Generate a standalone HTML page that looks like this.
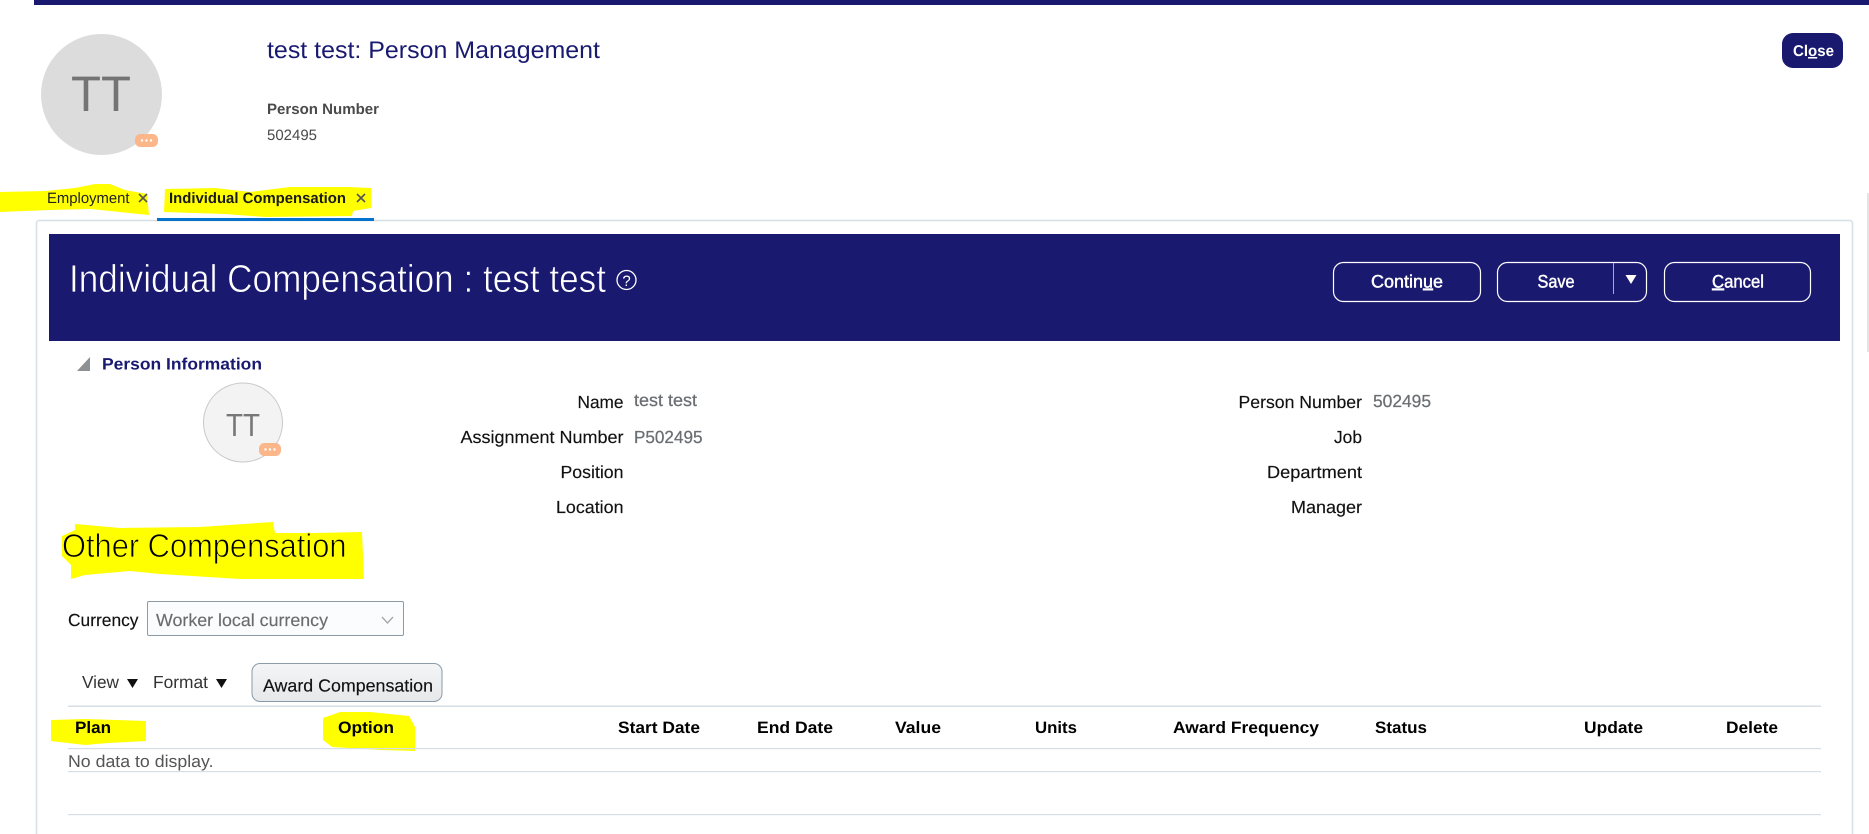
<!DOCTYPE html>
<html lang="en">
<head>
<meta charset="utf-8">
<title>Individual Compensation</title>
<style>
html,body{margin:0;padding:0;background:#fff;width:1869px;height:834px;overflow:hidden}
svg{display:block;position:absolute;left:0;top:0}
text{font-family:"Liberation Sans",sans-serif;text-rendering:geometricPrecision}
.navy{fill:#191970}
.lb{font-size:17.5px;fill:#111;stroke:#111;stroke-width:.15}
.val{font-size:17.5px;fill:#6a6e72;stroke:#6a6e72;stroke-width:.25}
.th{font-size:16.5px;font-weight:bold;fill:#000}
.btn{font-size:18px;fill:#fff;stroke:#fff;stroke-width:.45}
.ln{fill:#d6dfe6}
.y{fill:#ffff00}
</style>
</head>
<body>
<svg width="1869" height="834" viewBox="0 0 1869 834" xmlns="http://www.w3.org/2000/svg">
  <!-- top bar -->
  <rect x="34" y="0" width="1835" height="5" class="navy"/>

  <!-- large avatar -->
  <circle cx="101.5" cy="94.5" r="60.5" fill="#dcdcdc"/>
  <text x="71" y="111" font-size="50" fill="#747474" textLength="60" lengthAdjust="spacingAndGlyphs">TT</text>
  <rect x="135" y="134" width="23" height="13" rx="5.5" fill="#fbb68a"/>
  <circle cx="142" cy="140.5" r="1.2" fill="#fff"/><circle cx="146.5" cy="140.5" r="1.2" fill="#fff"/><circle cx="151" cy="140.5" r="1.2" fill="#fff"/>

  <!-- header -->
  <text x="267" y="58" font-size="24" class="navy" textLength="333" lengthAdjust="spacingAndGlyphs">test test: Person Management</text>
  <text x="267" y="114" font-size="15" font-weight="bold" fill="#4a4a4a" textLength="112" lengthAdjust="spacingAndGlyphs">Person Number</text>
  <text x="267" y="140" font-size="15" fill="#4a4a4a" textLength="50" lengthAdjust="spacingAndGlyphs">502495</text>

  <!-- close -->
  <rect x="1782" y="33" width="61" height="35" rx="11" class="navy"/>
  <text x="1793" y="56" font-size="15.5" font-weight="bold" fill="#fff" textLength="41" lengthAdjust="spacingAndGlyphs">Cl<tspan text-decoration="underline">o</tspan>se</text>

  <!-- tab highlights -->
  <polygon class="y" points="0,192 45,191 75,188 95,184 110,184 125,190 147,194 149,215 120,212 90,209 50,210 0,212"/>
  <polygon class="y" points="165,189 215,188 250,192 290,187 348,187 371,188 371,208 353,211 352,216 265,217 225,214 164,212"/>

  <!-- tabs -->
  <text x="47" y="203" font-size="15" fill="#222" textLength="82.5" lengthAdjust="spacingAndGlyphs">Employment</text>
  <path d="M139 194l8 8M147 194l-8 8" stroke="#555" stroke-width="1.6" fill="none"/>
  <text x="169" y="203" font-size="15" font-weight="bold" fill="#1a1a1a" textLength="177" lengthAdjust="spacingAndGlyphs">Individual Compensation</text>
  <path d="M357 194l8 8M365 194l-8 8" stroke="#555" stroke-width="1.6" fill="none"/>

  <!-- panel border -->
  <path d="M36.500 834V223a2.500 2.500 0 0 1 2.500-2.500H1850a2.500 2.500 0 0 1 2.500 2.500V834" fill="none" stroke="#d6dfe6" stroke-width="1.5"/>
  <rect x="157" y="218" width="217" height="3" fill="#0572ce"/>

  <!-- right edge -->
  <rect x="1867" y="193" width="2" height="159" fill="#e4e4e4"/>

  <!-- banner -->
  <rect x="49" y="234" width="1791" height="107" class="navy"/>
  <text x="69" y="292" font-size="39" fill="#fff" stroke="#191970" stroke-width=".7" textLength="537" lengthAdjust="spacingAndGlyphs">Individual Compensation : test test</text>
  <circle cx="626.500" cy="280" r="9.500" fill="none" stroke="#fff" stroke-width="1.300"/>
  <text x="626.500" y="286" font-size="15" fill="#fff" text-anchor="middle">?</text>

  <!-- banner buttons -->
  <rect x="1333.500" y="262.500" width="147" height="39" rx="10" fill="none" stroke="#fff" stroke-width="1.200"/>
  <text x="1371" y="287.500" class="btn" textLength="72" lengthAdjust="spacingAndGlyphs">Contin<tspan text-decoration="underline">u</tspan>e</text>
  <rect x="1497.500" y="262.500" width="149" height="39" rx="10" fill="none" stroke="#fff" stroke-width="1.200"/>
  <text x="1537.500" y="287.500" class="btn" textLength="37" lengthAdjust="spacingAndGlyphs">Save</text>
  <rect x="1613" y="263" width="1" height="31" fill="#a9a9c9"/>
  <polygon points="1625.500,275 1636.500,275 1631,284" fill="#fff"/>
  <rect x="1664.500" y="262.500" width="146" height="39" rx="10" fill="none" stroke="#fff" stroke-width="1.200"/>
  <text x="1712" y="287.500" class="btn" textLength="52" lengthAdjust="spacingAndGlyphs"><tspan text-decoration="underline">C</tspan>ancel</text>

  <!-- person info -->
  <polygon points="90,357 90,371 77,371" fill="#8d9194"/>
  <text x="102" y="369.500" font-size="16.500" font-weight="bold" class="navy" textLength="160" lengthAdjust="spacingAndGlyphs">Person Information</text>

  <circle cx="243" cy="422.500" r="39.500" fill="#f3f3f3" stroke="#c9c9c9"/>
  <text x="226" y="436" font-size="32" fill="#777" textLength="34" lengthAdjust="spacingAndGlyphs">TT</text>
  <rect x="259" y="443" width="22" height="13" rx="5.500" fill="#fbb68a"/>
  <circle cx="265.500" cy="449.500" r="1.200" fill="#fff"/><circle cx="270" cy="449.500" r="1.200" fill="#fff"/><circle cx="274.500" cy="449.500" r="1.200" fill="#fff"/>

  <text x="577.500" y="408" class="lb" textLength="46" lengthAdjust="spacingAndGlyphs">Name</text>
  <text x="460.500" y="443" class="lb" textLength="163" lengthAdjust="spacingAndGlyphs">Assignment Number</text>
  <text x="560.500" y="478" class="lb" textLength="63" lengthAdjust="spacingAndGlyphs">Position</text>
  <text x="556" y="513" class="lb" textLength="67.500" lengthAdjust="spacingAndGlyphs">Location</text>
  <text x="634" y="406" class="val" textLength="63" lengthAdjust="spacingAndGlyphs">test test</text>
  <text x="634" y="443" class="val" textLength="68.500" lengthAdjust="spacingAndGlyphs">P502495</text>

  <text x="1238.500" y="408" class="lb" textLength="123.500" lengthAdjust="spacingAndGlyphs">Person Number</text>
  <text x="1334" y="443" class="lb" textLength="28" lengthAdjust="spacingAndGlyphs">Job</text>
  <text x="1267" y="478" class="lb" textLength="95" lengthAdjust="spacingAndGlyphs">Department</text>
  <text x="1291" y="513" class="lb" textLength="71" lengthAdjust="spacingAndGlyphs">Manager</text>
  <text x="1373" y="407" class="val" textLength="58" lengthAdjust="spacingAndGlyphs">502495</text>

  <!-- other compensation -->
  <polygon class="y" points="75,524 120,528 200,527 273,522 275,533 315,533 362,532 364,579 300,579 240,579 160,574 130,571 85,575 71,579 71,565 62,556 62,536 75,530"/>
  <text x="62" y="557" font-size="33" fill="#000" stroke="#ffff00" stroke-width=".8" textLength="284.500" lengthAdjust="spacingAndGlyphs">Other Compensation</text>

  <text x="68" y="626" class="lb" textLength="70.500" lengthAdjust="spacingAndGlyphs">Currency</text>
  <rect x="147.500" y="601.500" width="256" height="34" rx="1.500" fill="#fbfcfd" stroke="#8b9ba8"/>
  <text x="156" y="626" font-size="17.500" fill="#6b6b6b" stroke="#6b6b6b" stroke-width=".15" textLength="172" lengthAdjust="spacingAndGlyphs">Worker local currency</text>
  <path d="M382 617l5.500 6 5.500-6" fill="none" stroke="#a5a9ad" stroke-width="1.400"/>

  <text x="82" y="688" font-size="17.500" fill="#333" textLength="37" lengthAdjust="spacingAndGlyphs">View</text>
  <polygon points="127,679 138,679 132.500,688" fill="#111"/>
  <text x="153" y="688" font-size="17.500" fill="#333" textLength="55" lengthAdjust="spacingAndGlyphs">Format</text>
  <polygon points="216,679 227,679 221.500,688" fill="#111"/>

  <defs><linearGradient id="g" x1="0" y1="0" x2="0" y2="1"><stop offset="0" stop-color="#f4f5f6"/><stop offset="1" stop-color="#e6e8ea"/></linearGradient></defs>
  <rect x="252" y="663.500" width="190" height="38" rx="8" fill="url(#g)" stroke="#8b9ba8"/>
  <text x="263" y="691.500" class="lb" textLength="170" lengthAdjust="spacingAndGlyphs">Award Compensation</text>

  <!-- table -->
  <rect x="68" y="705.500" width="1753" height="1.500" class="ln"/>
  <polygon class="y" points="51,720 85,719 146,721 146,741 108,743 85,745 51,741"/>
  <polygon class="y" points="323,718 340,712 370,712 409,716 415,727 415,751 380,750 332,747 323,740"/>
  <text x="75" y="733" class="th" textLength="36" lengthAdjust="spacingAndGlyphs">Plan</text>
  <text x="338" y="733" class="th" textLength="56" lengthAdjust="spacingAndGlyphs">Option</text>
  <text x="618" y="733" class="th" textLength="82" lengthAdjust="spacingAndGlyphs">Start Date</text>
  <text x="757" y="733" class="th" textLength="76" lengthAdjust="spacingAndGlyphs">End Date</text>
  <text x="895" y="733" class="th" textLength="46" lengthAdjust="spacingAndGlyphs">Value</text>
  <text x="1035" y="733" class="th" textLength="42" lengthAdjust="spacingAndGlyphs">Units</text>
  <text x="1173" y="733" class="th" textLength="146" lengthAdjust="spacingAndGlyphs">Award Frequency</text>
  <text x="1375" y="733" class="th" textLength="52" lengthAdjust="spacingAndGlyphs">Status</text>
  <text x="1584" y="733" class="th" textLength="59" lengthAdjust="spacingAndGlyphs">Update</text>
  <text x="1726" y="733" class="th" textLength="52" lengthAdjust="spacingAndGlyphs">Delete</text>
  <rect x="68" y="748" width="1753" height="1.200" class="ln"/>
  <text x="68" y="767" font-size="17" fill="#555" textLength="145.500" lengthAdjust="spacingAndGlyphs">No data to display.</text>
  <rect x="68" y="771" width="1753" height="1.200" class="ln"/>
  <rect x="68" y="814" width="1753" height="1.200" class="ln"/>
</svg>
</body>
</html>
